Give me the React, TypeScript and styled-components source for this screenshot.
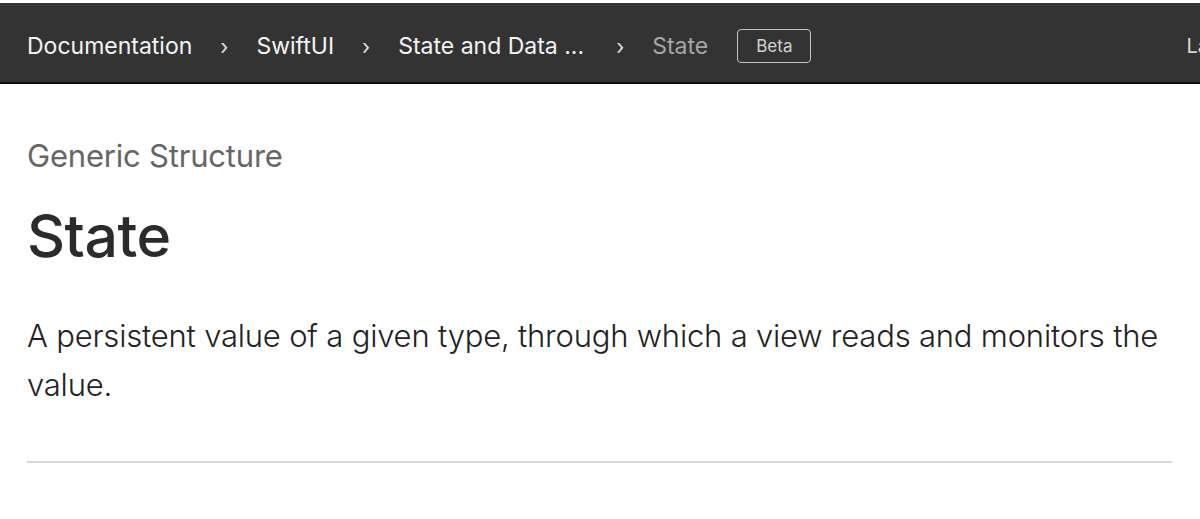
import React from 'react';
import styled, { createGlobalStyle } from 'styled-components';

const GlobalStyle = createGlobalStyle`
  html, body {
    margin: 0;
    padding: 0;
    background: #ffffff;
    font-family: Inter, "Noto Sans", "Liberation Sans", sans-serif;
    overflow: hidden;
  }
`;

const Page = styled.div`
  width: 1200px;
  height: 519px;
  padding-top: 3px;
  box-sizing: border-box;
  background: #fff;
  overflow: hidden;
`;

// "Language" runs off the right edge of the window, as in the capture
const NavBar = styled.nav`
  height: 72px;
  background: #333333;
  border-bottom: 2px solid #121212;
  display: flex;
  align-items: center;
  padding: 7px 0 0 27px;
  white-space: nowrap;
  overflow: hidden;
  & > * {
    flex-shrink: 0;
  }
`;

const Crumb = styled.a<{ $current?: boolean; $truncated?: boolean }>`
  font-size: 23px;
  color: ${p => (p.$current ? '#a6a6a6' : '#f4f4f4')};
  text-decoration: none;
  padding-right: ${p => (p.$truncated ? '4px' : '0')};
`;

const Chevron = styled.span`
  font-size: 21px;
  color: #e0e0e0;
  margin: 0 28px;
`;

const BetaTag = styled.span`
  margin-left: 29px;
  border: 1px solid #c4c4c4;
  border-radius: 4px;
  padding: 6px 18px;
  font-size: 17px;
  line-height: 20px;
  color: #d2d2d2;
`;

const Language = styled.span`
  margin-left: 375px;
  font-size: 20px;
  color: #d6d6d6;
`;

const Main = styled.main`
  padding: 54px 28px 0 27px;
`;

const Eyebrow = styled.div`
  font-size: 31px;
  line-height: 36px;
  color: #666666;
  letter-spacing: -0.2px;
`;

const Title = styled.h1`
  margin: 27px 0 0;
  font-size: 59px;
  line-height: 70px;
  font-weight: 500;
  color: #2b2b2b;
  letter-spacing: -0.5px;
`;

const Abstract = styled.p`
  margin: 40px 0 0;
  font-size: 31px;
  font-weight: 300;
  color: #222222;
  line-height: 49px;
  letter-spacing: -0.2px;
`;

const Rule = styled.hr`
  margin: 52px 0 0;
  border: none;
  height: 2px;
  background: #d8d8d8;
`;

export default function App() {
  const crumbs = ['Documentation', 'SwiftUI', 'State and Data ...'];
  return (
    <Page>
      <GlobalStyle />
      <NavBar>
        {crumbs.map((c, i) => (
          <React.Fragment key={c}>
            <Crumb href="#" $truncated={i === crumbs.length - 1}>{c}</Crumb>
            <Chevron>›</Chevron>
          </React.Fragment>
        ))}
        <Crumb $current>State</Crumb>
        <BetaTag>Beta</BetaTag>
        <Language>Language</Language>
      </NavBar>
      <Main>
        <Eyebrow>Generic Structure</Eyebrow>
        <Title>State</Title>
        <Abstract>
          A persistent value of a given type, through which a view reads and monitors the value.
        </Abstract>
        <Rule />
      </Main>
    </Page>
  );
}
